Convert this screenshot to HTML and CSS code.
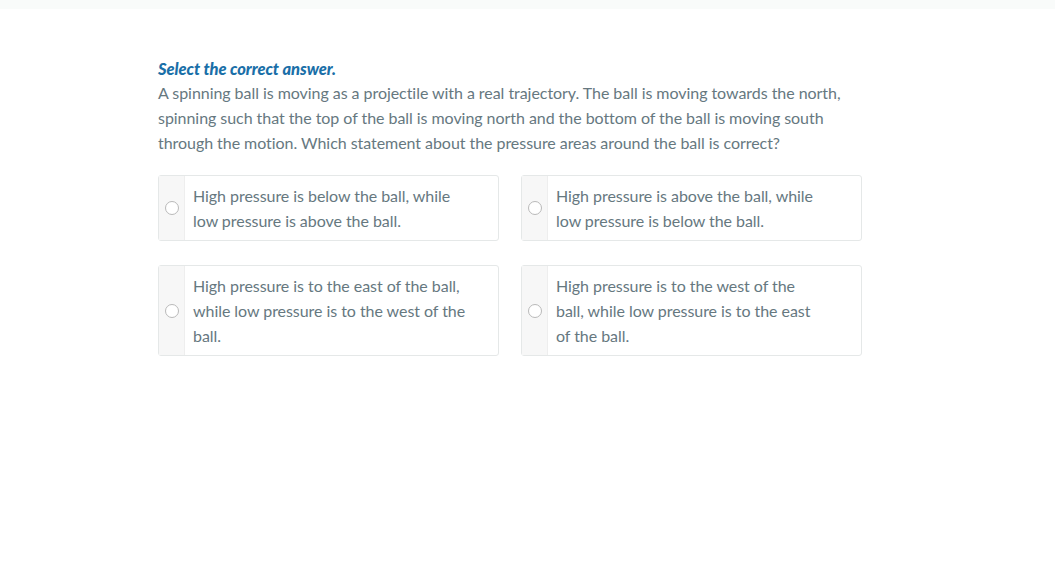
FILE: index.html
```html
<!DOCTYPE html>
<html lang="en">
<head>
    <meta charset="UTF-8">
    <meta name="viewport" content="width=device-width, initial-scale=1.0">
    <title>Question</title>
    <link rel="stylesheet" href="styles.css">
</head>
<body>
    <div class="top-bar"></div>
    <div class="question">
        <p class="instruction">Select the correct answer.</p>
        <p class="stem">A spinning ball is moving as a projectile with a real trajectory. The ball is moving towards the north, spinning such that the top of the ball is moving north and the bottom of the ball is moving south through the motion. Which statement about the pressure areas around the ball is correct?</p>

        <div class="choices">
            <label class="choice">
                <span class="choice-radio"><input type="radio" name="answer"></span>
                <span class="choice-text">High pressure is below the ball, while low pressure is above the ball.</span>
            </label>
            <label class="choice">
                <span class="choice-radio"><input type="radio" name="answer"></span>
                <span class="choice-text">High pressure is above the ball, while low pressure is below the ball.</span>
            </label>
            <label class="choice">
                <span class="choice-radio"><input type="radio" name="answer"></span>
                <span class="choice-text">High pressure is to the east of the ball, while low pressure is to the west of the ball.</span>
            </label>
            <label class="choice">
                <span class="choice-radio"><input type="radio" name="answer"></span>
                <span class="choice-text">High pressure is to the west of the<br>ball, while low pressure is to the east<br>of the ball.</span>
            </label>
        </div>
    </div>
</body>
</html>
```

FILE: styles.css
```css
body {
    font-family: Lato, "Open Sans", sans-serif;
    margin: 0;
    background-color: #ffffff;
    color: #66787f;
    letter-spacing: -0.05px;
}

.top-bar {
    height: 9px;
    background-color: #f9fbfa;
}

.question {
    width: 705px;
    margin: 0 0 0 158px;
    padding-top: 49px;
}

.instruction {
    margin: 0;
    font-weight: 900;
    font-style: italic;
    font-size: 16.5px;
    line-height: 22px;
    color: #1a6fa8;
}

.stem {
    margin: 0;
    font-size: 16px;
    line-height: 25px;
}

.choices {
    display: grid;
    grid-template-columns: 341px 341px;
    column-gap: 22px;
    row-gap: 24px;
    margin-top: 20px;
    align-items: start;
}

.choice {
    display: flex;
    border: 1px solid #e5e8e8;
    border-radius: 3px;
    background-color: #ffffff;
    cursor: pointer;
}

.choice-radio {
    display: flex;
    align-items: center;
    justify-content: center;
    width: 25px;
    flex-shrink: 0;
    background-color: #f7f7f7;
    border-right: 1px solid #eeeeee;
}

.choice-radio input {
    appearance: none;
    -webkit-appearance: none;
    margin: 0;
    width: 14px;
    height: 14px;
    border: 1px solid #b9b9b9;
    border-radius: 50%;
    background-color: #ffffff;
    cursor: pointer;
}

.choice-radio input:checked {
    border: 4px solid #1a6fa8;
}

.choice-text {
    padding: 7px 28px 7px 8px;
    font-size: 16px;
    line-height: 25px;
}
```
